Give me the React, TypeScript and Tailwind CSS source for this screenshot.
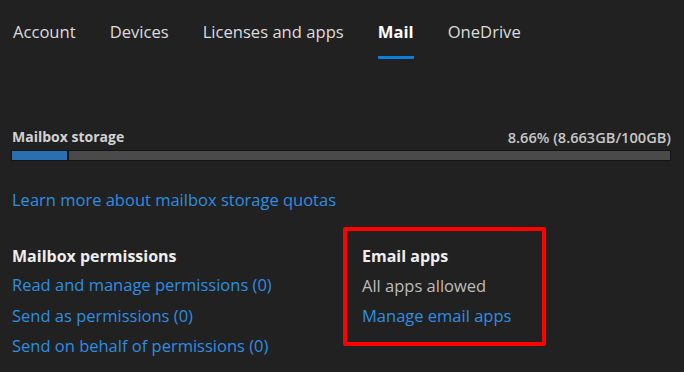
const tabs = ['Account', 'Devices', 'Licenses and apps', 'Mail', 'OneDrive']

const permissions = [
  'Read and manage permissions (0)',
  'Send as permissions (0)',
  'Send on behalf of permissions (0)',
]

export default function App() {
  const used = 8.663
  const total = 100

  return (
    <div
      className="w-[684px] h-[372px] overflow-hidden bg-[#212121] text-[#e6e6e6]"
      style={{ fontFamily: '"Open Sans", "Noto Sans", sans-serif' }}
    >
      {/* tabs */}
      <nav className="flex gap-[34px] pl-[13px] pt-[20px]">
        {tabs.map((t) => (
          <div key={t} className="flex flex-col items-center">
            <span
              className={
                t === 'Mail'
                  ? 'text-[16.6px] leading-[24px] font-bold text-white'
                  : 'text-[16.6px] leading-[24px] text-[#dcdcdc]'
              }
            >
              {t}
            </span>
            <span
              className={
                t === 'Mail' ? 'mt-[12px] h-[3px] w-[36px] bg-[#0a7fd9]' : 'mt-[12px] h-[3px] w-[36px]'
              }
            />
          </div>
        ))}
      </nav>

      {/* storage */}
      <div className="mt-[69px] flex items-end justify-between pl-[12px] pr-[13px] leading-[18px]">
        <span className="text-[14px] font-bold text-[#d2d2d2]">Mailbox storage</span>
        <span className="text-[14.6px] font-semibold text-[#c8c8c8]">
          {((used / total) * 100).toFixed(2)}% ({used}GB/{total}GB)
        </span>
      </div>
      <div className="ml-[11px] mr-[13px] mt-[4px] flex h-[11px] gap-[2px] bg-[#141414] p-px">
        <div className="w-[55px] bg-[#2b6fb3]" />
        <div className="flex-1 bg-[#4a4a4a]" />
      </div>

      <a className="mt-[27px] block pl-[12px] text-[16.5px] leading-[24px] text-[#2f8ee0]">
        Learn more about mailbox storage quotas
      </a>

      {/* details */}
      <div className="mt-[15px] flex">
        <div className="w-[343px] pl-[12px] pt-[17px]">
          <div className="text-[16px] font-bold leading-[24px] text-[#eeeeee]">Mailbox permissions</div>
          <div className="mt-[5px] flex flex-col gap-[6.5px]">
            {permissions.map((p) => (
              <a key={p} className="text-[16.5px] leading-[24px] text-[#2f8ee0]">
                {p}
              </a>
            ))}
          </div>
        </div>
        <div className="h-[119px] w-[203px] rounded-[2px] border-4 border-[#ff0000] pl-[15px] pt-[13px]">
          <div className="text-[16px] font-bold leading-[24px] text-[#eeeeee]">Email apps</div>
          <div className="mt-[6px] text-[16.5px] leading-[24px] text-[#bdbdbd]">All apps allowed</div>
          <a className="mt-[6px] block text-[16.5px] leading-[24px] text-[#2f8ee0]">Manage email apps</a>
        </div>
      </div>
    </div>
  )
}
